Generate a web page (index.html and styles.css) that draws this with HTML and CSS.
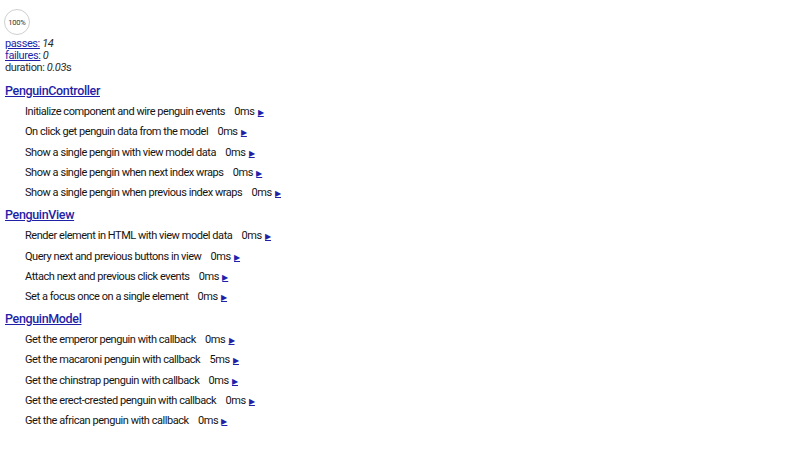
FILE: index.html
```html
<!DOCTYPE html>
<html>
<head>
<meta charset="utf-8">
<link rel="stylesheet" href="styles.css">
</head>
<body>
<div class="report">
  <div class="progress"><span>100%</span></div>
  <ul class="stats">
    <li><a href="#">passes:</a> <em>14</em></li>
    <li><a href="#">failures:</a> <em>0</em></li>
    <li>duration: <em>0.03</em>s</li>
  </ul>
  <ul class="suites">
    <li class="suite">
      <h1><a href="#">PenguinController</a></h1>
      <ul class="tests">
        <li><h2>Initialize component and wire penguin events <span class="dur">0ms</span> <a class="replay" href="#">&#x25B6;</a></h2></li>
        <li><h2>On click get penguin data from the model <span class="dur">0ms</span> <a class="replay" href="#">&#x25B6;</a></h2></li>
        <li><h2>Show a single pengin with view model data <span class="dur">0ms</span> <a class="replay" href="#">&#x25B6;</a></h2></li>
        <li><h2>Show a single pengin when next index wraps <span class="dur">0ms</span> <a class="replay" href="#">&#x25B6;</a></h2></li>
        <li><h2>Show a single pengin when previous index wraps <span class="dur">0ms</span> <a class="replay" href="#">&#x25B6;</a></h2></li>
      </ul>
    </li>
    <li class="suite">
      <h1><a href="#">PenguinView</a></h1>
      <ul class="tests">
        <li><h2>Render element in HTML with view model data <span class="dur">0ms</span> <a class="replay" href="#">&#x25B6;</a></h2></li>
        <li><h2>Query next and previous buttons in view <span class="dur">0ms</span> <a class="replay" href="#">&#x25B6;</a></h2></li>
        <li><h2>Attach next and previous click events <span class="dur">0ms</span> <a class="replay" href="#">&#x25B6;</a></h2></li>
        <li><h2>Set a focus once on a single element <span class="dur">0ms</span> <a class="replay" href="#">&#x25B6;</a></h2></li>
      </ul>
    </li>
    <li class="suite">
      <h1><a href="#">PenguinModel</a></h1>
      <ul class="tests">
        <li><h2>Get the emperor penguin with callback <span class="dur">0ms</span> <a class="replay" href="#">&#x25B6;</a></h2></li>
        <li><h2>Get the macaroni penguin with callback <span class="dur">5ms</span> <a class="replay" href="#">&#x25B6;</a></h2></li>
        <li><h2>Get the chinstrap penguin with callback <span class="dur">0ms</span> <a class="replay" href="#">&#x25B6;</a></h2></li>
        <li><h2>Get the erect-crested penguin with callback <span class="dur">0ms</span> <a class="replay" href="#">&#x25B6;</a></h2></li>
        <li><h2>Get the african penguin with callback <span class="dur">0ms</span> <a class="replay" href="#">&#x25B6;</a></h2></li>
      </ul>
    </li>
  </ul>
</div>
</body>
</html>
```
FILE: styles.css
```css
html, body { margin: 0; padding: 0; background: #fff; }
body { font-family: Roboto, "Liberation Sans", sans-serif; color: #222; }
.report { padding: 9px 5px 0 5px; }
ul { list-style: none; margin: 0; padding: 0; }
a { color: #1f1fa8; }
.progress {
  width: 24px; height: 24px; border: 1px solid #cfcfcf; border-radius: 50%;
  margin-left: -1px;
  display: flex; align-items: center; justify-content: center;
  font-size: 7.5px; color: #333; letter-spacing: -0.2px;
}
.stats { margin-top: 3px; font-size: 11px; line-height: 12px; color: #2a2a2a; letter-spacing: -0.4px; }
.stats em { font-style: italic; }
.suites { margin-top: 8px; }
.suite h1 { margin: 0; font-size: 12.5px; font-weight: 500; line-height: 18px; letter-spacing: -0.35px; }
.tests { padding-left: 20px; padding-top: 2px; padding-bottom: 2.5px; }
.tests li { height: 20.35px; }
.tests h2 { margin: 0; font-size: 11px; font-weight: 400; line-height: 20px; color: #141414; letter-spacing: -0.45px; }
.dur { margin-left: 7px; }
.replay { font-size: 7.5px; margin-left: 1px; letter-spacing: 0; }
```
